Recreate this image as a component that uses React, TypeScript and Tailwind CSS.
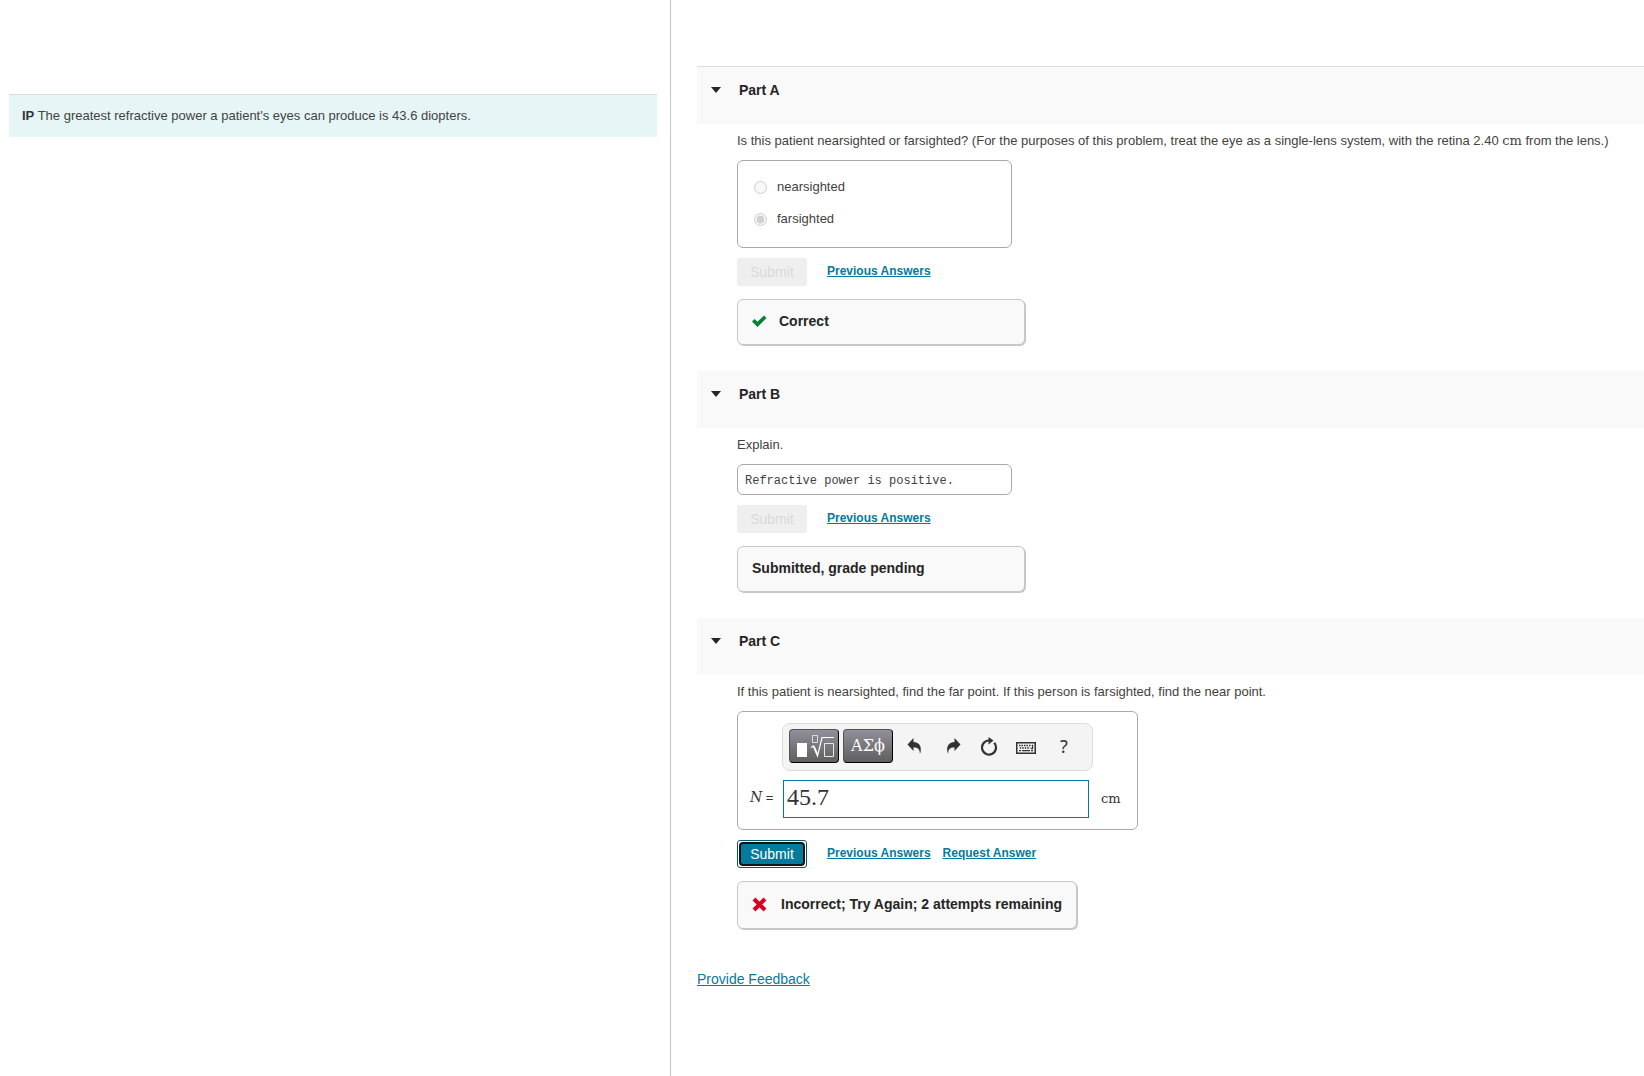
import type { ReactNode } from 'react';

const linkClass = 'text-[12px] leading-4 font-bold text-[#047a9c] underline';
const boxClass = 'rounded-md border border-[#a9a9a9]';
const mathClass = "font-['DejaVu_Serif',serif]";

function Part({ title, first, children }: { title: string; first?: boolean; children: ReactNode }) {
  return (
    <section className="mb-[26px]">
      <header className={first ? 'border-t border-[#dcdcdc]' : ''}>
        <button type="button" className="flex h-[57px] w-full items-start bg-[#f9f9f9] pt-[14px] pl-[14px] text-left">
          <svg className="mt-[6px] mr-[18px] h-[6px] w-[10px]" viewBox="0 0 10 6" fill="#252525">
            <path d="M0 0h10L5 6z" />
          </svg>
          <span className="text-[14px] leading-[18px] font-bold text-[#252525]">{title}</span>
        </button>
      </header>
      <div className="pt-2 pl-10">{children}</div>
    </section>
  );
}

function Question({ children }: { children: ReactNode }) {
  return <p className="mb-[10px] text-[13px] leading-[18px] text-[#424242]">{children}</p>;
}

function Actions({ active, children }: { active?: boolean; children: ReactNode }) {
  return (
    <div className="mt-[10px] mb-[13px] flex items-center">
      {active ? (
        <button
          type="button"
          className="mr-5 h-7 w-[70px] rounded-[3px] border border-[#005a70] bg-white p-px"
        >
          <span className="block h-6 rounded-[4px] border-2 border-[#151515] bg-[#047a9c] text-[14px] leading-[20px] text-white">
            Submit
          </span>
        </button>
      ) : (
        <button type="button" disabled className="mr-5 h-7 w-[70px] rounded-[2px] bg-[#efefef] text-[14px] text-[#dadada]">
          Submit
        </button>
      )}
      <div className="flex gap-3 pb-[2px]">{children}</div>
    </div>
  );
}

function Result({ wide, children }: { wide?: boolean; children: ReactNode }) {
  return (
    <div
      className={`${wide ? 'h-12 w-[340px]' : 'h-[46px] w-72'} flex items-center rounded-md border border-[#c7c7c7] bg-[#f9f9f9] px-[14px] pb-[2px] text-[14px] font-bold whitespace-nowrap text-[#252525] shadow-[1px_1px_0_0_#c7c7c7]`}
    >
      {children}
    </div>
  );
}

function PaletteButton({ label, children }: { label: string; children: ReactNode }) {
  return (
    <button
      type="button"
      aria-label={label}
      className="mr-1 flex h-[34px] w-[50px] items-center justify-center rounded-[4px] border border-black border-t-[#555] border-l-[#555] bg-gradient-to-b from-[#92909a] to-[#5f5f5f] font-['DejaVu_Serif',serif] text-[16px] leading-6 text-white"
    >
      {children}
    </button>
  );
}

function Toolbar() {
  return (
    <div className="ml-8 flex h-12 w-[311px] items-center rounded-lg border border-[#dcdcdc] bg-[#f4f4f4] pb-[2px] pl-[6px] text-[#333]">
      <PaletteButton label="Templates">
        <svg className="h-8 w-10" viewBox="0 0 40 32" fill="none" stroke="#fff">
          <path d="M3 13h10v14H3z" fill="#fff" stroke="none" />
          <path d="M18.500 5.500h5v7h-5z" stroke="#ddd" />
          <path d="M17 17.500l2.500-1.500L23.500 26 28 7.500h12" strokeWidth="1.200" />
          <path d="M20 16.500l3.300 8" strokeWidth="1.800" />
          <path d="M30.500 13.500h9v13h-9z" stroke="#e8e8e8" />
        </svg>
      </PaletteButton>
      <PaletteButton label="Symbols">ΑΣϕ</PaletteButton>
      <button type="button" aria-label="Undo" className="ml-[10px]">
        <svg className="h-4 w-[15px]" viewBox="0 0 15 16" fill="currentColor">
          <path d="M6.500 0v4c5 .2 8 3 7.200 9.500-.1.900-.6 1.700-.9 1.900.1-4-2-6-6.300-5.900V13L.5 6.500z" />
        </svg>
      </button>
      <button type="button" aria-label="Redo" className="ml-6">
        <svg className="h-4 w-[15px]" viewBox="0 0 15 16" fill="currentColor">
          <path d="M8.500 0v4C3.500 4.200.5 7 1.300 13.500c.1.900.6 1.700.9 1.900-.1-4 2-6 6.300-5.900V13l6-6.500z" />
        </svg>
      </button>
      <button type="button" aria-label="Reset" className="ml-5">
        <svg className="h-[19px] w-[17px]" viewBox="0 0 17 19" fill="none" stroke="currentColor">
          <path d="M13.200 5.800a7 7 0 1 1-5.200-2.300" strokeWidth="2.200" />
          <path d="M7.500 0l5 3.500-5 4z" fill="currentColor" stroke="none" />
        </svg>
      </button>
      <button type="button" aria-label="Keyboard shortcuts" className="mt-1 ml-[18px]">
        <svg className="h-3 w-5" viewBox="0 0 20 12" fill="none" stroke="currentColor">
          <path d="M.75.750h18.500v10.500H.75z" strokeWidth="1.500" />
          <path d="M3 3.500h11.500M3.800 6h10.500" strokeWidth="1.500" strokeDasharray="1.500 1" />
          <path d="M3 8.700h2m1 0h8m1 0h2" strokeWidth="1.300" />
          <path d="M16.500 2.800v3.800h-1.500" strokeWidth="1.300" />
        </svg>
      </button>
      <button type="button" aria-label="Help" className="ml-6 font-['Noto_Sans',sans-serif] text-[18px] leading-6">
        ?
      </button>
    </div>
  );
}

export default function App() {
  return (
    <div className="flex min-h-screen bg-white font-['Liberation_Sans',Arial,sans-serif]">
      <aside className="w-[671px] shrink-0 border-r border-[#c0c4c8] pt-[94px] pr-[13px] pl-[9px]">
        <p className="border-t border-[#d9dcd8] bg-[#e6f6f6] px-[13px] py-3 text-[13px] leading-[18px] text-[#424242]">
          <strong className="text-[#333]">IP</strong> The greatest refractive power a patient's eyes can produce is 43.6 diopters.
        </p>
      </aside>

      <main className="min-w-0 flex-1 pt-[66px] pl-[26px]">
        <Part title="Part A" first>
          <Question>
            Is this patient nearsighted or farsighted? (For the purposes of this problem, treat the eye as a single-lens
            system, with the retina 2.40 <span className={`${mathClass} leading-none`}>cm</span> from the lens.)
          </Question>
          <div className={`${boxClass} h-[88px] w-[275px] px-4 pt-[17px] text-[13px] text-[#424242]`}>
            <label className="mb-[14px] flex h-[18px] items-center gap-[10px]">
              <input type="radio" name="sight" disabled className="size-[13px]" />
              nearsighted
            </label>
            <label className="flex h-[18px] items-center gap-[10px]">
              <input type="radio" name="sight" disabled defaultChecked className="size-[13px]" />
              farsighted
            </label>
          </div>
          <Actions>
            <a href="#" className={linkClass}>Previous Answers</a>
          </Actions>
          <Result>
            <svg className="mr-3 h-[15px] w-[15px]" viewBox="0 0 15 15" fill="#038238">
              <path d="M0 7.500L2.500 5l3 2.800L12 1.500 14.500 4 5.500 13z" />
            </svg>
            Correct
          </Result>
        </Part>

        <Part title="Part B">
          <Question>Explain.</Question>
          <input
            type="text"
            aria-label="Explain"
            readOnly
            value="Refractive power is positive."
            className={`${boxClass} block h-[31px] w-[275px] px-[7px] pt-[3px] font-['Liberation_Mono',monospace] text-[12px] text-[#424242]`}
          />
          <Actions>
            <a href="#" className={linkClass}>Previous Answers</a>
          </Actions>
          <Result>Submitted, grade pending</Result>
        </Part>

        <Part title="Part C">
          <Question>
            If this patient is nearsighted, find the far point. If this person is farsighted, find the near point.
          </Question>
          <div className={`${boxClass} h-[119px] w-[401px] pt-[11px] pl-3`}>
            <Toolbar />
            <div className="mt-[9px] flex items-center text-[13px] text-[#333]">
              <label htmlFor="answer" className="w-[33px] pb-1">
                <i className="font-['DejaVu_Serif',serif] text-[14px]">N</i> =
              </label>
              <input
                id="answer"
                type="text"
                defaultValue="45.7"
                className="h-[38px] w-[306px] border border-[#047a9c] px-[3px] pb-1 font-['Liberation_Serif',serif] text-[24px] text-[#333] outline-none"
              />
              <span className={`${mathClass} ml-3`}>cm</span>
            </div>
          </div>
          <Actions active>
            <a href="#" className={linkClass}>Previous Answers</a>
            <a href="#" className={linkClass}>Request Answer</a>
          </Actions>
          <Result wide>
            <svg className="mr-[14px] h-[15px] w-[15px] shrink-0" viewBox="0 0 15 15" fill="none" stroke="#db0020" strokeWidth="4">
              <path d="M2 2l11 11M13 2L2 13" />
            </svg>
            Incorrect; Try Again; 2 attempts remaining
          </Result>
        </Part>

        <a href="#" className="mt-[14px] mb-10 inline-block text-[14px] leading-5 text-[#047a9c] underline">
          Provide Feedback
        </a>
      </main>
    </div>
  );
}
